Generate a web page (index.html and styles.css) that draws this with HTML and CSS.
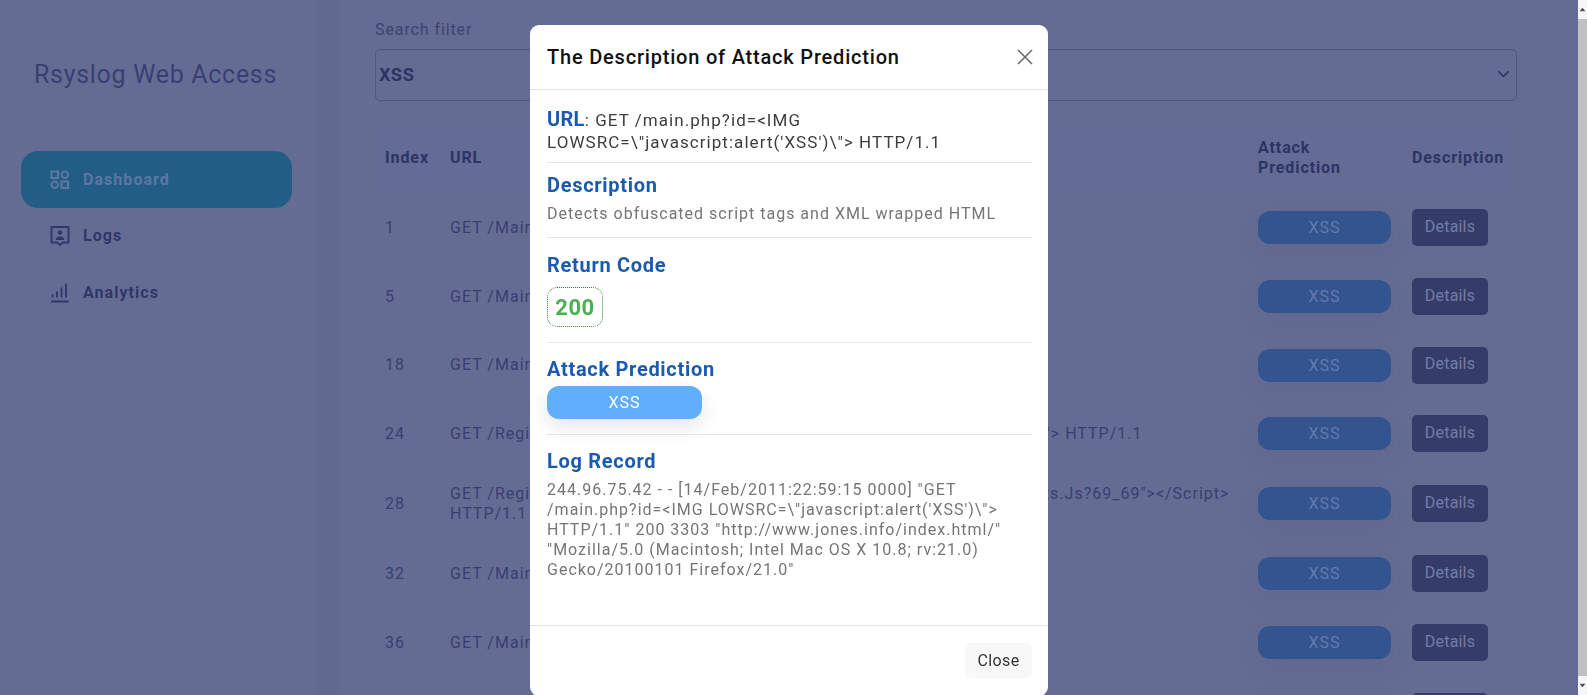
FILE: index.html
```html
<!DOCTYPE html>
<html lang="en">
<head>
<meta charset="utf-8">
<title>Rsyslog Web Access</title>
<link rel="stylesheet" href="styles.css">
</head>
<body>
<div class="app">
  <aside class="sidebar">
    <div class="logo">Rsyslog Web Access</div>
    <nav class="nav">
      <a class="nav-item active">
        <svg class="nav-icon" viewBox="0 0 20 20" fill="none" stroke="currentColor" stroke-width="2"><rect x="1.5" y="1.5" width="6.5" height="6.5"/><circle cx="14.8" cy="4.8" r="3.3"/><circle cx="4.8" cy="14.8" r="3.3"/><rect x="11.5" y="11.5" width="6.5" height="6.5"/></svg>
        <span>Dashboard</span>
      </a>
      <a class="nav-item">
        <svg class="nav-icon" viewBox="0 0 20 20" fill="none" stroke="currentColor" stroke-width="1.8"><path d="M1.5 1h17v15.5h-5.8L10 19.2l-2.7-2.7H1.500z" stroke-linejoin="round"/><circle cx="10" cy="6.500" r="2.300" fill="currentColor" stroke="none"/><path d="M5.500 14c.4-2.600 2.300-3.800 4.500-3.800s4.100 1.200 4.500 3.800z" fill="currentColor" stroke="none"/></svg>
        <span>Logs</span>
      </a>
      <a class="nav-item">
        <svg class="nav-icon" viewBox="0 0 20 20" fill="none" stroke="currentColor" stroke-width="1.800"><path d="M2.500 14.500v-3M7 14.500V8.500M11.500 14.500V4.500M16 14.500V0.500M1 18.500h17.500"/></svg>
        <span>Analytics</span>
      </a>
    </nav>
  </aside>
  <main class="main">
    <label class="filter-label">Search filter</label>
    <div class="select">
      <span class="select-value">xss</span>
      <svg class="chevron" viewBox="0 0 14 8" fill="none" stroke="currentColor" stroke-width="1.800"><path d="M1.500 1.200 7 6.500l5.500-5.300"/></svg>
    </div>
    <table class="logs">
      <thead>
        <tr><th>Index</th><th>URL</th><th>Attack Prediction</th><th>Description</th></tr>
      </thead>
      <tbody>
        <tr><td>1</td><td>GET /Main.php?id=&lt;Script&gt;alert(1)&lt;/Script&gt; HTTP/1.1</td><td><span class="pill">XSS</span></td><td><button class="details">Details</button></td></tr>
        <tr><td>5</td><td>GET /Main.php?id=&lt;Script&gt;alert(2)&lt;/Script&gt; HTTP/1.1</td><td><span class="pill">XSS</span></td><td><button class="details">Details</button></td></tr>
        <tr class="short"><td>18</td><td>GET /Main.php?id=&lt;Script&gt;alert(3)&lt;/Script&gt; HTTP/1.1</td><td><span class="pill">XSS</span></td><td><button class="details">Details</button></td></tr>
        <tr><td>24</td><td>GET /Register.php?id=&lt;Img Src="X" Onerror="Alert(1)"&gt;&lt;Img Eror="Alert(2)"&gt; HTTP/1.1</td><td><span class="pill">XSS</span></td><td><button class="details">Details</button></td></tr>
        <tr class="tall"><td>28</td><td><span class="nowrap">GET /Register.php?id=&lt;Script Type="Javascript" Src="Http://Ex.Com/Scripts.Js?69_69"&gt;&lt;/Script&gt;</span> HTTP/1.1</td><td><span class="pill">XSS</span></td><td><button class="details">Details</button></td></tr>
        <tr><td>32</td><td>GET /Main.php?id=&lt;Script&gt;alert(4)&lt;/Script&gt; HTTP/1.1</td><td><span class="pill">XSS</span></td><td><button class="details">Details</button></td></tr>
        <tr><td>36</td><td>GET /Main.php?id=&lt;Script&gt;alert(5)&lt;/Script&gt; HTTP/1.1</td><td><span class="pill">XSS</span></td><td><button class="details">Details</button></td></tr>
        <tr><td>40</td><td>GET /Main.php?id=&lt;Script&gt;alert(6)&lt;/Script&gt; HTTP/1.1</td><td><span class="pill">XSS</span></td><td><button class="details">Details</button></td></tr>
      </tbody>
    </table>
  </main>
  <div class="scrollbar">
    <div class="scroll-btn"><svg viewBox="0 0 8 6" class="arrow"><path d="M4 1 7.500 5H.5z"/></svg></div>
    <div class="scroll-thumb"></div>
    <div class="scroll-btn"><svg viewBox="0 0 8 6" class="arrow"><path d="M4 5 .5 1h7z"/></svg></div>
  </div>
</div>
<div class="overlay">
  <section class="modal">
    <header class="modal-header">
      <h2 class="modal-title">The Description of Attack Prediction</h2>
      <svg class="close-x" viewBox="0 0 16 16" fill="none" stroke="currentColor" stroke-width="1.500"><path d="M1 1l14 14M15 1 1 15"/></svg>
    </header>
    <div class="modal-body">
      <div class="section sec-url"><b class="url-key">URL</b>: GET /main.php?id=&lt;IMG LOWSRC=\"javascript:alert('XSS')\"&gt; HTTP/1.1</div>
      <div class="section sec-desc">
        <h3 class="heading">Description</h3>
        <p class="muted">Detects obfuscated script tags and XML wrapped HTML</p>
      </div>
      <div class="section sec-code">
        <h3 class="heading">Return Code</h3>
        <div class="code">200</div>
      </div>
      <div class="section sec-attack">
        <h3 class="heading">Attack Prediction</h3>
        <div class="pill-big">XSS</div>
      </div>
      <div class="sec-log">
        <h3 class="heading">Log Record</h3>
        <p class="muted">244.96.75.42 - - [14/Feb/2011:22:59:15 0000] "GET /main.php?id=&lt;IMG LOWSRC=\"javascript:alert('XSS')\"&gt; HTTP/1.1" 200 3303 "http://www.jones.info/index.html/" "Mozilla/5.0 (Macintosh; Intel Mac OS X 10.8; rv:21.0) Gecko/20100101 Firefox/21.0"</p>
      </div>
    </div>
    <footer class="modal-footer"><button class="close-btn">Close</button></footer>
  </section>
</div>
</body>
</html>
```
FILE: styles.css
```css
* { box-sizing: border-box; }
html, body { margin: 0; height: 100%; overflow: hidden; }
body { font-family: Roboto, "Liberation Sans", sans-serif; background: #656c93; color: #343c6c; font-size: 16px; }
.app { display: flex; height: 695px; overflow: hidden; }

.sidebar { width: 340px; flex: none; padding: 0 48px 0 21px; background: linear-gradient(90deg, #656c94 0, #656c94 92%, #626a92 93%, #626a92 100%); }
.logo { margin: 59px 0 0 13px; font-size: 25px; line-height: 32px; letter-spacing: .7px; color: #384073; white-space: nowrap; }
.nav { margin-top: 60px; }
.nav-item { display: flex; align-items: center; height: 57px; padding-left: 29px; gap: 13px; font-weight: 700; letter-spacing: 1.05px; color: #2f3768; border-radius: 17px; }
.nav-item.active { margin-bottom: -1px; background: #215d84; color: #5c77a0; }
.nav-icon { width: 20px; height: 20px; flex: none; }

.main { flex: 1; min-width: 0; padding: 20px 61px 0 35px; }
.filter-label { display: block; line-height: 20px; letter-spacing: .9px; color: #3c4372; }
.select { display: flex; align-items: center; justify-content: space-between; height: 52px; margin-top: 9px; padding: 0 6px 3px 3px; border: 1px solid #4f5785; border-radius: 5px; }
.select-value { font-size: 23px; font-weight: 500; color: #2c3465; }
.chevron { width: 13px; height: 8px; color: #2c3465; }

.logs { width: 100%; margin-top: 26px; border-collapse: collapse; table-layout: fixed; letter-spacing: 1px; }
.logs th:nth-child(1) { width: 65px; }
.logs th:nth-child(3) { width: 154px; }
.logs th:nth-child(4) { width: 115px; }
.logs th { height: 66px; padding: 0 10px 5px; text-align: left; font-weight: 700; line-height: 20px; letter-spacing: .9px; color: #2c3465; background: #646b94; }
.logs td { height: 69px; padding: 0 10px; line-height: 20px; color: #383f70; }
.logs tr.short td { height: 68px; }
.logs tr.tall td { height: 71px; }
.nowrap { white-space: nowrap; }
.pill { display: block; width: 133px; height: 33px; line-height: 33px; text-align: center; border-radius: 12px; background: #33548f; color: #627aae; box-shadow: 0 10px 24px rgba(60, 68, 120, .08); }
.details { display: block; width: 76px; height: 37px; padding: 0 0 2px; border: 0; border-radius: 5px; background: #353c69; color: #727ca7; font: inherit; letter-spacing: .2px; }

.scrollbar { width: 9px; flex: none; display: flex; flex-direction: column; background: #f1f1f1; }
.scroll-btn { height: 19px; flex: none; display: flex; align-items: center; justify-content: center; background: #f6f6f6; }
.scroll-thumb { flex: 1; background: #c0c0c0; }
.arrow { width: 7px; height: 5px; fill: #505050; }

.overlay { position: fixed; top: 0; left: 0; right: 9px; bottom: 0; display: flex; justify-content: center; padding-top: 25px; overflow: hidden; }
.modal { width: 518px; height: 671px; flex: none; display: flex; flex-direction: column; background: #fff; border-radius: 9px; color: #333; }
.modal-header { height: 65px; flex: none; display: flex; align-items: center; justify-content: space-between; padding: 0 15px 0 17px; border-bottom: 1px solid #e4e4e4; }
.modal-title { margin: 0; font-size: 20px; font-weight: 500; letter-spacing: .8px; color: #111; }
.close-x { width: 16px; height: 16px; color: #666; }
.modal-body { flex: 1; padding: 0 16px 0 17px; letter-spacing: 1px; }
.section { border-bottom: 1px solid #e8e8e8; }
.sec-url { padding: 18px 0 9px; font-size: 17px; line-height: 22px; letter-spacing: 1.05px; color: #3d3d3d; }
.url-key { font-size: 20px; font-weight: 700; letter-spacing: .3px; color: #1a5bb0; }
.sec-desc { padding: 10px 0 13px; }
.sec-code { padding: 15px 0 15px; }
.sec-attack { padding: 14px 0 15px; }
.sec-log { padding-top: 14px; }
.heading { margin: 0; font-size: 20px; font-weight: 700; line-height: 24px; letter-spacing: .7px; color: #1a5bb0; }
.muted { margin: 7px 0 0; line-height: 20px; color: #757575; }
.code { width: 56px; height: 40px; margin-top: 10px; line-height: 39px; text-align: center; font-size: 22px; font-weight: 700; letter-spacing: .6px; color: #4caf50; border: 1px dotted #2e7d32; border-radius: 10px; }
.pill-big { width: 155px; height: 33px; margin-top: 5px; line-height: 33px; text-align: center; border-radius: 12px; background: #61aeff; color: #fff; box-shadow: 0 8px 20px rgba(0, 0, 0, .1); }
.modal-footer { height: 71px; flex: none; display: flex; justify-content: flex-end; padding: 17px 16px 0; border-top: 1px solid #e4e4e4; }
.close-btn { width: 67px; height: 35px; padding: 0; border: 0; border-radius: 5px; background: #f8f8f8; color: #333; font: inherit; letter-spacing: .4px; }
```
